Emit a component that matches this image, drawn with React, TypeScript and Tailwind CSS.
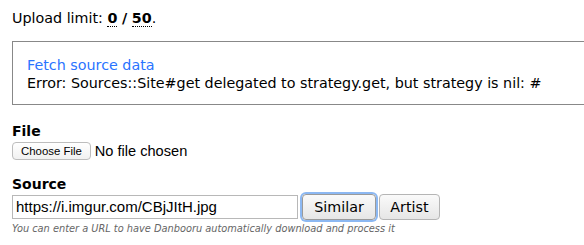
import React from "react";

export default function App() {
  const verdana = { fontFamily: '"DejaVu Sans", Verdana, sans-serif' };
  const arial = { fontFamily: '"Liberation Sans", Arial, sans-serif' };
  return (
    <div className="w-[584px] h-[245px] overflow-hidden bg-white text-black text-[14.3px] leading-[18px]" style={verdana}>
      <div className="pl-3 pt-[9px]">
        <p className="h-[18px]">
          Upload limit:{" "}
          <span className="font-bold border-b border-dotted border-black">0</span>{" "}
          <span className="font-bold">/</span>{" "}
          <span className="font-bold border-b border-dotted border-black">50</span>.
        </p>
        <div className="mt-[14px] w-[640px] h-[64px] border border-[#888] pl-[14px] pt-[14px]">
          <a className="text-[#2a74ff] block">Fetch source data</a>
          <div>Error: Sources::Site#get delegated to strategy.get, but strategy is nil: #</div>
        </div>
        <div className="mt-[18px]">
          <div className="font-bold text-[14px] leading-[16px]">File</div>
          <div className="flex items-center mt-[3px] gap-[4px]">
            <button
              className="h-[18px] px-[8px] rounded-[4px] border border-[#bdbdbd] bg-gradient-to-b from-white to-[#f1f1f1] text-[11.4px] leading-[16px] text-black"
              style={arial}
            >
              Choose File
            </button>
            <span className="text-[14.6px]" style={arial}>No file chosen</span>
          </div>
        </div>
        <div className="mt-[16px]">
          <div className="font-bold text-[14px] leading-[16px]">Source</div>
          <div className="flex items-center mt-[2px]">
            <div
              className="w-[286px] h-[24px] border border-[#b8b8b8] px-[3px] text-[15px] leading-[22px]"
              style={arial}
            >
              https://i.imgur.com/CBjJItH.jpg
            </div>
            <button className="ml-[4px] w-[74px] h-[26px] rounded-[4px] border border-[#9a9a9a] bg-gradient-to-b from-[#fafafa] to-[#e6e6e6] text-[14.3px] shadow-[0_0_0_2px_#8cb8f2]">
              Similar
            </button>
            <button className="ml-[3px] w-[61px] h-[26px] rounded-[4px] border border-[#b5b5b5] bg-gradient-to-b from-[#fafafa] to-[#e6e6e6] text-[14.3px]">
              Artist
            </button>
          </div>
          <div className="text-[9.8px] leading-[14px] italic text-[#666] mt-[2px]">
            You can enter a URL to have Danbooru automatically download and process it
          </div>
        </div>
      </div>
    </div>
  );
}
